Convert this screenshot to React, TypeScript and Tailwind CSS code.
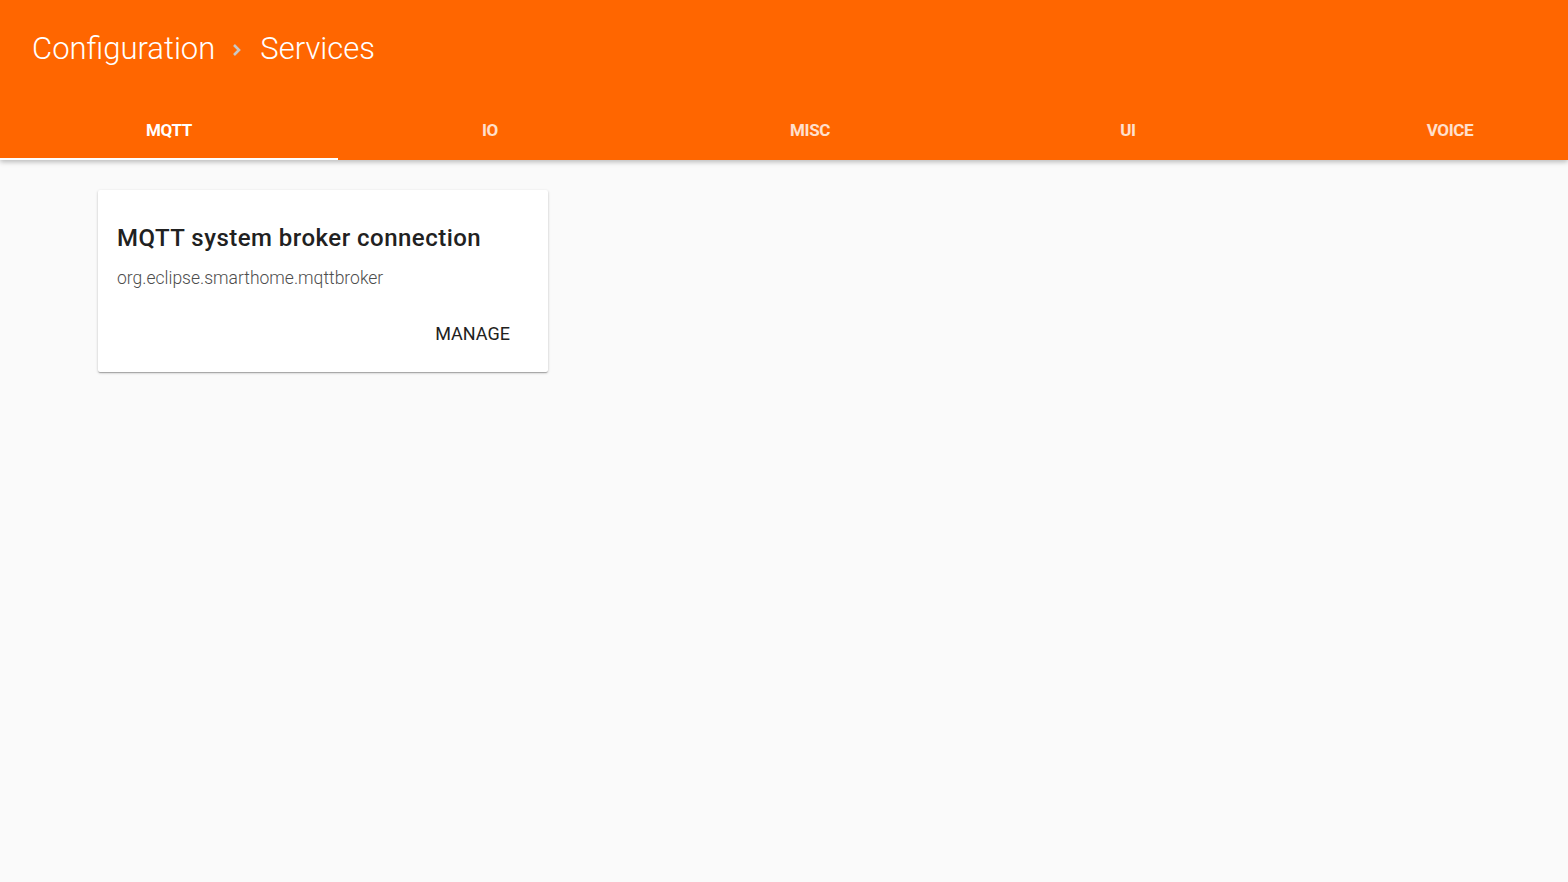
const tabs = [
  { label: "MQTT", width: "w-[338px]", active: true },
  { label: "IO", width: "w-[304px]", active: false },
  { label: "MISC", width: "w-[336px]", active: false },
  { label: "UI", width: "w-[300px]", active: false },
  { label: "VOICE", width: "w-[344px]", active: false },
];

export default function App() {
  return (
    <div className="min-h-[882px] bg-[#fafafa] font-['Roboto',sans-serif] overflow-hidden">
      <header className="bg-[#ff6600] shadow-[0_2px_5px_rgba(0,0,0,0.26)] relative">
        <div className="h-[98px] flex items-center pl-[32px] text-white">
          <h2 className="flex items-center text-[31px] font-light">
            <span>Configuration</span>
            <svg className="ml-[15px] mr-[16px] w-[14px] h-[14px] mt-[2px]" viewBox="0 0 14 14" fill="none">
              <path d="M4 2L9 7L4 12" stroke="#c8c8c8" strokeWidth="2.6" />
            </svg>
            <span>Services</span>
          </h2>
        </div>
        <nav className="flex h-[62px] overflow-hidden">
          {tabs.map((t) => (
            <div
              key={t.label}
              className={`${t.width} shrink-0 relative flex items-center justify-center pt-[4px] text-[17px] font-bold tracking-[-0.02em] ${
                t.active ? "text-white" : "text-white/80"
              }`}
            >
              {t.label}
              {t.active && <span className="absolute left-0 right-0 bottom-0 h-[2px] bg-white" />}
            </div>
          ))}
        </nav>
      </header>

      <main className="pt-[30px] pl-[98px]">
        <div className="w-[450px] h-[182px] bg-white rounded-[2px] shadow-[0_1px_3px_rgba(0,0,0,0.2),0_1px_1px_rgba(0,0,0,0.14),0_2px_1px_-1px_rgba(0,0,0,0.12)] flex flex-col">
          <div className="px-[19px] pt-[33px]">
            <h3 className="text-[24px] leading-[30px] font-medium tracking-[0.02em] text-[#212121]">
              MQTT system broker connection
            </h3>
            <p className="mt-[15px] text-[17.5px] leading-[20px] font-light text-[#4d4d4d]">
              org.eclipse.smarthome.mqttbroker
            </p>
          </div>
          <div className="flex justify-end pr-[38px] pt-[32px]">
            <button className="text-[18px] font-normal text-[#212121] uppercase">Manage</button>
          </div>
        </div>
      </main>
    </div>
  );
}
